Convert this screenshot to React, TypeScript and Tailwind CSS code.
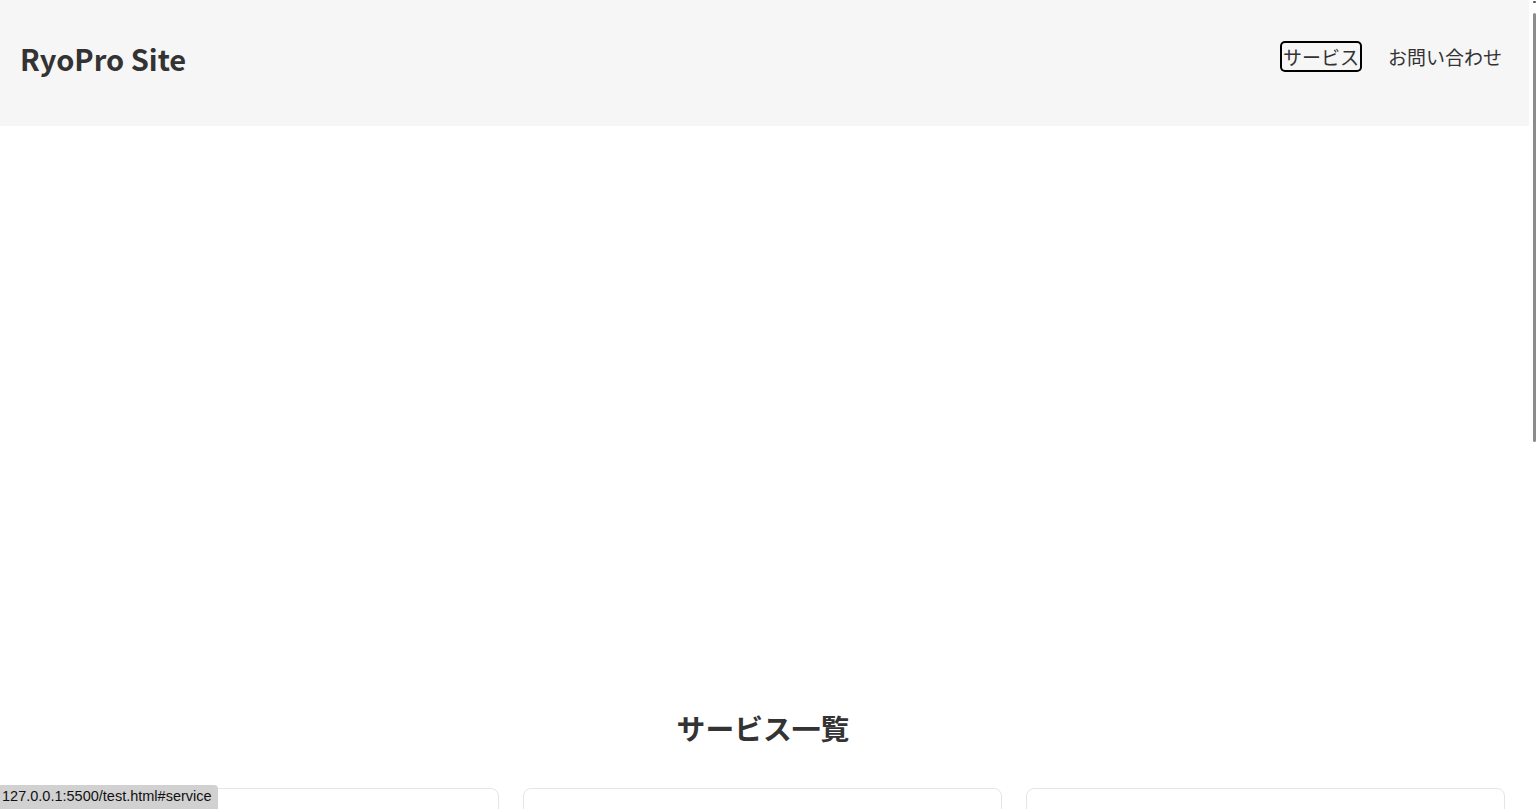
const services = ['web', 'design', 'support'];

function Header() {
  return (
    <header className="h-[126px] shrink-0 bg-[#f6f6f6] flex items-center justify-between pl-5 pr-[27px]">
      <h1 className="text-[29px] font-bold text-[#333] leading-none pb-[10px]">RyoPro Site</h1>
      <nav className="flex items-center gap-[28px] text-[19px] text-[#333] pb-[14px]">
        <a href="#service" className="px-[1px] rounded-[3px] ring-2 ring-black leading-[27px]">
          サービス
        </a>
        <a href="#contact" className="leading-[27px]">お問い合わせ</a>
      </nav>
    </header>
  );
}

function Scrollbar() {
  return (
    <div className="w-[7px] shrink-0 bg-white flex flex-col items-end">
      <div className="w-[3px] h-[2px] bg-[#555] rounded-full mt-[1px]" />
      <div className="w-[3px] h-[429px] mt-[10px] rounded-full bg-[#8c8c8c]" />
    </div>
  );
}

export default function App() {
  return (
    <div
      className="h-screen w-full flex overflow-hidden bg-white relative"
      style={{ fontFamily: '"Noto Sans CJK JP", "Noto Sans", sans-serif' }}
    >
      <div className="flex-1 flex flex-col overflow-hidden">
        <Header />
        <section className="h-[581px] shrink-0" />
        <section id="service" className="shrink-0">
          <h2 className="text-[28.8px] leading-[42px] font-bold text-[#333] text-center pr-[3px]">サービス一覧</h2>
          <div className="grid grid-cols-3 gap-6 pl-5 pr-6 mt-[39px]">
            {services.map((s) => (
              <div key={s} className="h-[200px] bg-white border border-[#e5e5e5] rounded-lg" />
            ))}
          </div>
        </section>
      </div>
      <Scrollbar />
      <div
        className="absolute left-0 bottom-0 h-[24px] pl-[2px] pr-[6px] bg-[#d1d1d1] rounded-tr-[4px] flex items-center text-[14.5px] text-[#111]"
        style={{ fontFamily: '"Liberation Sans", sans-serif' }}
      >
        127.0.0.1:5500/test.html#service
      </div>
    </div>
  );
}
